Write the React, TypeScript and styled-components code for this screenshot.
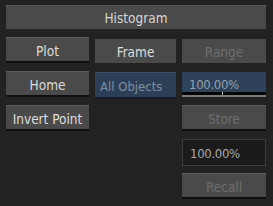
import React from "react";
import styled, { createGlobalStyle, css } from "styled-components";

const Global = createGlobalStyle`
  html, body { margin: 0; padding: 0; background: #222222; }
  body {
    width: 273px; height: 206px; overflow: hidden;
    font-family: "DejaVu Sans Condensed", "DejaVu Sans", sans-serif;
    font-stretch: condensed;
  }
`;

const Panel = styled.div`
  box-sizing: border-box;
  width: 273px;
  height: 206px;
  background: #222222;
  padding: 5px 7px 0 6px;
  display: grid;
  grid-template-columns: 83px 81px 84px;
  grid-template-rows: 24px repeat(5, 26px);
  column-gap: 6px;
  row-gap: 8px;
  align-items: start;
  font-size: 13.5px;
`;

const Header = styled.div`
  grid-column: 1 / -1;
  height: 24px;
  background: #4a4a4a;
  border-top: 1px solid #555;
  box-sizing: border-box;
  color: #d6d6d6;
  display: flex;
  align-items: center;
  justify-content: center;
`;

const Button = styled.div<{ $disabled?: boolean; $flat?: boolean; $col: number }>`
  grid-column: ${(p) => p.$col};
  box-sizing: border-box;
  height: 26px;
  padding-top: 3px;
  background: #4a4a4a;
  border-top: 1px solid #5e5e5e;
  border-bottom: 2px solid #0f0f0f;
  color: ${(p) => (p.$disabled ? "#6e6e6e" : "#dcdcdc")};
  display: flex;
  align-items: center;
  justify-content: center;
  ${(p) =>
    p.$flat &&
    css`
      margin-top: 2px;
      height: 24px;
      padding-top: 2px;
      border-top: none;
      border-bottom: none;
    `}
`;

const Selector = styled.div<{ $col: number }>`
  grid-column: ${(p) => p.$col};
  box-sizing: border-box;
  height: 27px;
  margin-top: 1px;
  padding: 2px 0 0 5px;
  background: #2c3f56;
  border-top: 1px solid #3a5069;
  border-bottom: 2px solid #141c26;
  color: #7e8fa4;
  font-size: 13px;
  display: flex;
  align-items: center;
`;

const SliderField = styled.div<{ $col: number }>`
  grid-column: ${(p) => p.$col};
  margin-top: 1px;
  display: flex;
  flex-direction: column;
`;

const SliderValue = styled.div`
  box-sizing: border-box;
  height: 20px;
  padding: 4px 0 0 7px;
  background: #2e4259;
  color: #94a0ae;
  font-size: 13px;
  letter-spacing: -0.3px;
  display: flex;
  align-items: center;
`;

const SliderTrack = styled.div`
  position: relative;
  height: 3px;
  background: #050505;
  border-bottom: 2px solid #7a7a7a;
`;

const Thumb = styled.div`
  position: absolute;
  left: 40px;
  top: 0;
  width: 1px;
  height: 3px;
  background: #c8c8c8;
`;

const Field = styled.div<{ $col: number }>`
  grid-column: ${(p) => p.$col};
  box-sizing: border-box;
  height: 27px;
  padding: 2px 0 0 7px;
  background: #1b1b1b;
  border: 1px solid #3c3c3c;
  color: #a8a8a8;
  font-size: 13px;
  letter-spacing: -0.3px;
  display: flex;
  align-items: center;
`;

const Spacer = styled.div<{ $col: number }>`
  grid-column: ${(p) => p.$col};
`;

export default function App() {
  return (
    <>
      <Global />
      <Panel>
        <Header>Histogram</Header>
        <Button $col={1}>Plot</Button>
        <Button $col={2} $flat>Frame</Button>
        <Button $col={3} $flat $disabled>Range</Button>

        <Button $col={1}>Home</Button>
        <Selector $col={2}>All Objects</Selector>
        <SliderField $col={3}>
          <SliderValue>100.00%</SliderValue>
          <SliderTrack>
            <Thumb />
          </SliderTrack>
        </SliderField>

        <Button $col={1}>Invert Point</Button>
        <Spacer $col={2} />
        <Button $col={3} $disabled>Store</Button>

        <Spacer $col={1} />
        <Spacer $col={2} />
        <Field $col={3}>100.00%</Field>

        <Spacer $col={1} />
        <Spacer $col={2} />
        <Button $col={3} $disabled>Recall</Button>
      </Panel>
    </>
  );
}
